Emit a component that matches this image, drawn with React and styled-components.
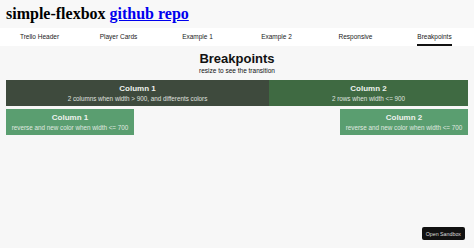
import React from "react";
import styled, { createGlobalStyle, css } from "styled-components";

const GlobalStyle = createGlobalStyle`
  html, body {
    margin: 0;
    padding: 0;
    background: #f7f7f7;
  }
  body {
    width: 474px;
    height: 248px;
    overflow: hidden;
    font-family: "Liberation Sans", Arial, sans-serif;
  }
`;

const Page = styled.div`
  position: relative;
  width: 474px;
  height: 248px;
  background: #f7f7f7;
`;

const Header = styled.header`
  height: 28px;
  padding: 0 6px;
  display: flex;
  align-items: center;
  background: #f8f8f8;
`;

const Title = styled.h1`
  margin: 0;
  font-family: "Liberation Serif", "Times New Roman", serif;
  font-size: 16px;
  font-weight: bold;
  color: #000;
  line-height: 1;
  a {
    color: #0000ee;
    text-decoration: underline;
  }
`;

const Nav = styled.nav`
  height: 18px;
  display: grid;
  grid-template-columns: repeat(6, 1fr);
  background: #fff;
`;

const Tab = styled.div`
  display: flex;
  justify-content: center;
  align-items: stretch;
  font-size: 6.5px;
  color: #1a1a1a;
`;

const TabLabel = styled.span`
  display: flex;
  align-items: center;
  padding-top: 1px;
  border-bottom: 2px solid transparent;
  ${(p) =>
    p.$active &&
    css`
      border-bottom-color: #111;
    `}
`;

const Intro = styled.div`
  padding-top: 6px;
  text-align: center;
  color: #111;
`;

const Heading = styled.h2`
  margin: 0;
  font-size: 13px;
  font-weight: bold;
  line-height: 14px;
`;

const Sub = styled.div`
  font-size: 6.5px;
  line-height: 9px;
`;

const Row = styled.div`
  display: flex;
  padding: 0 6px;
  margin-top: ${(p) => p.$top}px;
  justify-content: space-between;
`;

const Column = styled.div`
  flex: ${(p) => p.$flex || "none"};
  width: ${(p) => (p.$width ? `${p.$width}px` : "auto")};
  height: 26px;
  background: ${(p) => p.$bg};
  color: #eef2ee;
  display: flex;
  flex-direction: column;
  align-items: center;
  justify-content: center;
  box-sizing: border-box;
`;

const ColTitle = styled.div`
  font-size: 8px;
  font-weight: bold;
  line-height: 10px;
`;

const ColText = styled.div`
  font-size: 6.3px;
  line-height: 9px;
  opacity: 0.9;
`;

const SandboxButton = styled.button`
  position: absolute;
  right: 9px;
  bottom: 8px;
  height: 13px;
  padding: 0 4px;
  border: none;
  border-radius: 2px;
  background: #111;
  color: #ddd;
  font-family: "Liberation Sans", Arial, sans-serif;
  font-size: 5.3px;
`;

const tabs = [
  "Trello Header",
  "Player Cards",
  "Example 1",
  "Example 2",
  "Responsive",
  "Breakpoints",
];

export default function App() {
  return (
    <Page>
      <GlobalStyle />
      <Header>
        <Title>
          simple-flexbox <a href="#">github repo</a>
        </Title>
      </Header>
      <Nav>
        {tabs.map((t) => (
          <Tab key={t}>
            <TabLabel $active={t === "Breakpoints"}>{t}</TabLabel>
          </Tab>
        ))}
      </Nav>
      <Intro>
        <Heading>Breakpoints</Heading>
        <Sub>resize to see the transition</Sub>
      </Intro>
      <Row $top={5}>
        <Column $flex="263 1 0" $bg="#3e4a3d">
          <ColTitle>Column 1</ColTitle>
          <ColText>2 columns when width &gt; 900, and differents colors</ColText>
        </Column>
        <Column $flex="199 1 0" $bg="#3f6a42">
          <ColTitle>Column 2</ColTitle>
          <ColText>2 rows when width &lt;= 900</ColText>
        </Column>
      </Row>
      <Row $top={3}>
        <Column $width={128} $bg="#5a9e70">
          <ColTitle>Column 1</ColTitle>
          <ColText>reverse and new color when width &lt;= 700</ColText>
        </Column>
        <Column $width={128} $bg="#5a9e70">
          <ColTitle>Column 2</ColTitle>
          <ColText>reverse and new color when width &lt;= 700</ColText>
        </Column>
      </Row>
      <SandboxButton>Open Sandbox</SandboxButton>
    </Page>
  );
}
